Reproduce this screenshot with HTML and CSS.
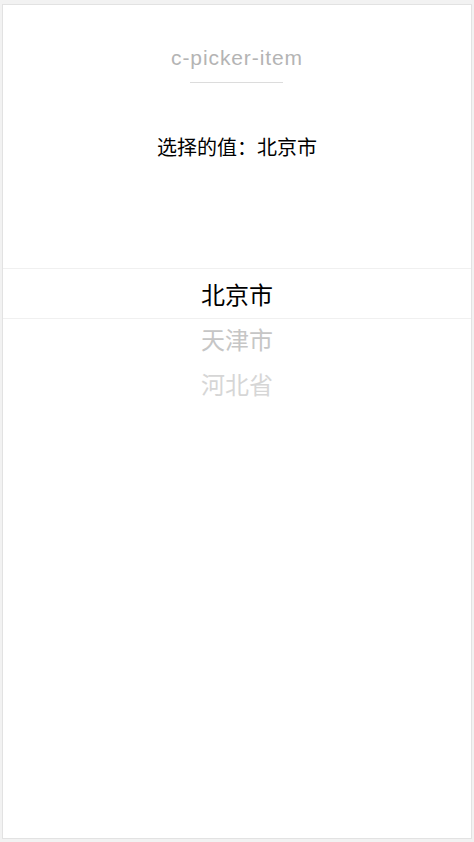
FILE: index.html
```html
<!DOCTYPE html>
<html lang="zh-CN">
<head>
<meta charset="utf-8">
<title>c-picker-item</title>
<link rel="stylesheet" href="styles.css">
</head>
<body>
<div class="page">
  <header class="head">
    <h1 class="title">c-picker-item</h1>
    <div class="rule"></div>
  </header>
  <p class="value">选择的值：北京市</p>
  <div class="picker">
    <div class="indicator"></div>
    <ul class="list">
      <li class="item sel">北京市</li>
      <li class="item near">天津市</li>
      <li class="item far">河北省</li>
    </ul>
  </div>
</div>
</body>
</html>
```

FILE: styles.css
```css
html, body {
  margin: 0;
  padding: 0;
  background: #f2f2f2;
}
body {
  font-family: "Liberation Sans", "Noto Sans CJK SC", sans-serif;
  padding: 4px 2px 3px 2px;
}
.page {
  box-sizing: border-box;
  height: 835px;
  background: #fff;
  border: 1px solid #e2e2e2;
  display: flex;
  flex-direction: column;
  align-items: center;
}
.head {
  display: flex;
  flex-direction: column;
  align-items: center;
  padding-top: 41px;
}
.title {
  margin: 0;
  font-weight: normal;
  font-size: 21px;
  letter-spacing: 0.9px;
  line-height: 24px;
  color: #b4b4b4;
}
.rule {
  width: 93px;
  height: 1px;
  background: #dcdcdc;
  margin-top: 12px;
}
.value {
  margin: 52px 0 0;
  font-family: "Noto Sans CJK SC", sans-serif;
  font-size: 20px;
  line-height: 24px;
  color: #000;
}
.picker {
  position: relative;
  align-self: stretch;
  margin-top: 112px;
}
.indicator {
  position: absolute;
  left: 0;
  right: 0;
  top: -3px;
  height: 49px;
  border-top: 1px solid #f0f0f0;
  border-bottom: 1px solid #f0f0f0;
}
.list {
  list-style: none;
  margin: 0;
  padding: 0;
}
.item {
  height: 45px;
  display: flex;
  align-items: center;
  justify-content: center;
  font-family: "Noto Sans CJK SC", sans-serif;
  font-size: 24px;
}
.sel { color: #000; }
.near { color: #c6c6c6; }
.far { color: #d6d6d6; }
```
